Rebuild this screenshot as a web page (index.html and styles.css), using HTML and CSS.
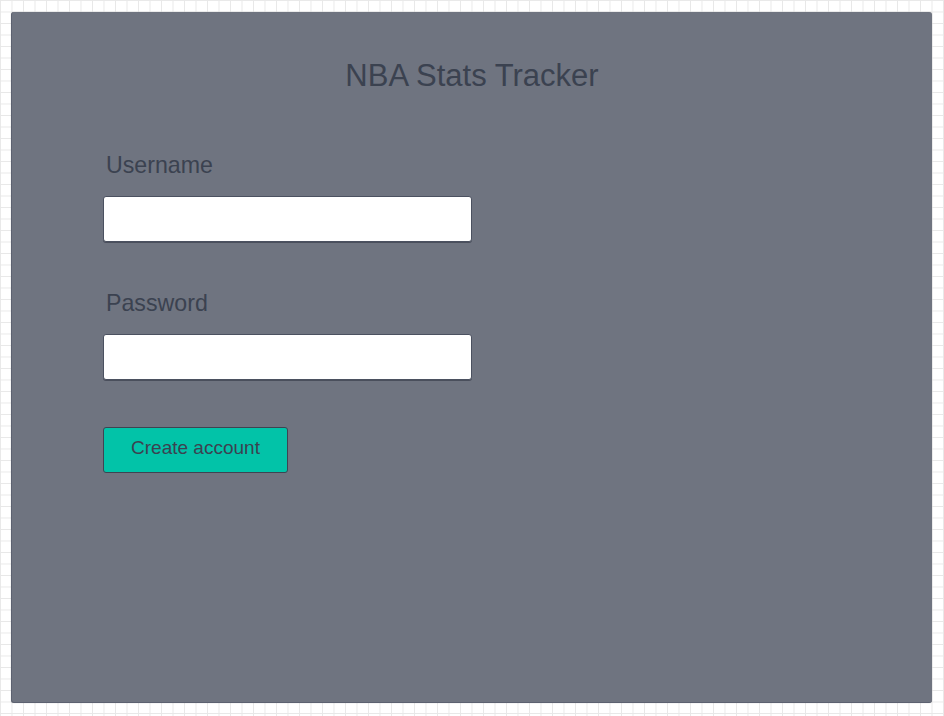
FILE: index.html
```html
<!DOCTYPE html>
<html>
<head>
  <title>NBA Stats Tracker</title>
  <link rel="stylesheet" href="styles.css">
</head>
<body>
  <div class="card">
    <h1 class="title">NBA Stats Tracker</h1>

    <form class="signup">
      <div class="field">
        <label for="username">Username</label>
        <input type="text" id="username">
      </div>

      <div class="field">
        <label for="password">Password</label>
        <input type="password" id="password">
      </div>

      <button type="button">Create account</button>
    </form>
  </div>
</body>
</html>
```

FILE: styles.css
```css
/* page */
html, body {
  height: 100%;
}
body {
  margin: 0;
  font-family: "Liberation Sans", Arial, sans-serif;
  color: #3b4250;
  background-color: #fff;
  background-image:
    linear-gradient(to right, #e8e8e8 1px, transparent 1px),
    linear-gradient(to bottom, #e8e8e8 1px, transparent 1px);
  background-size: 11.5px 11.5px;
  background-position: 0 0;
  overflow: hidden;
}
.card {
  box-sizing: border-box;
  height: 691px;
  margin: 12px 12px 0 11px;
  padding-top: 46px;
  background: #6f7480;
  border-radius: 3px;
  border-left: 1px solid #5c6170;
  border-bottom: 1px solid #5c6170;
  box-shadow: 0 0 1px rgba(0, 0, 0, 0.35);
}
.title {
  margin: 0;
  font-size: 31px;
  line-height: 36px;
  font-weight: normal;
  text-align: center;
}
.signup {
  display: flex;
  flex-direction: column;
  align-items: flex-start;
  margin-top: 57px;
  padding-left: 91px;
}
.field {
  display: flex;
  flex-direction: column;
  margin-bottom: 47px;
}
.field label {
  font-size: 23.2px;
  line-height: 28px;
  padding-left: 3px;
  margin-bottom: 17px;
}
.field input {
  box-sizing: border-box;
  width: 369px;
  height: 46px;
  border: 1px solid #4b5160;
  border-radius: 3px;
  background: #fff;
  box-shadow: 0 1px 0 #4a4f5c;
  font-size: 18px;
  padding: 0 10px;
}
button {
  box-sizing: border-box;
  width: 185px;
  height: 46px;
  font-family: inherit;
  font-size: 19px;
  color: #3b4250;
  background: #02c3a8;
  border: 1px solid #3e4452;
  border-radius: 3px;
  padding: 0 0 4px;
  cursor: pointer;
}
```
